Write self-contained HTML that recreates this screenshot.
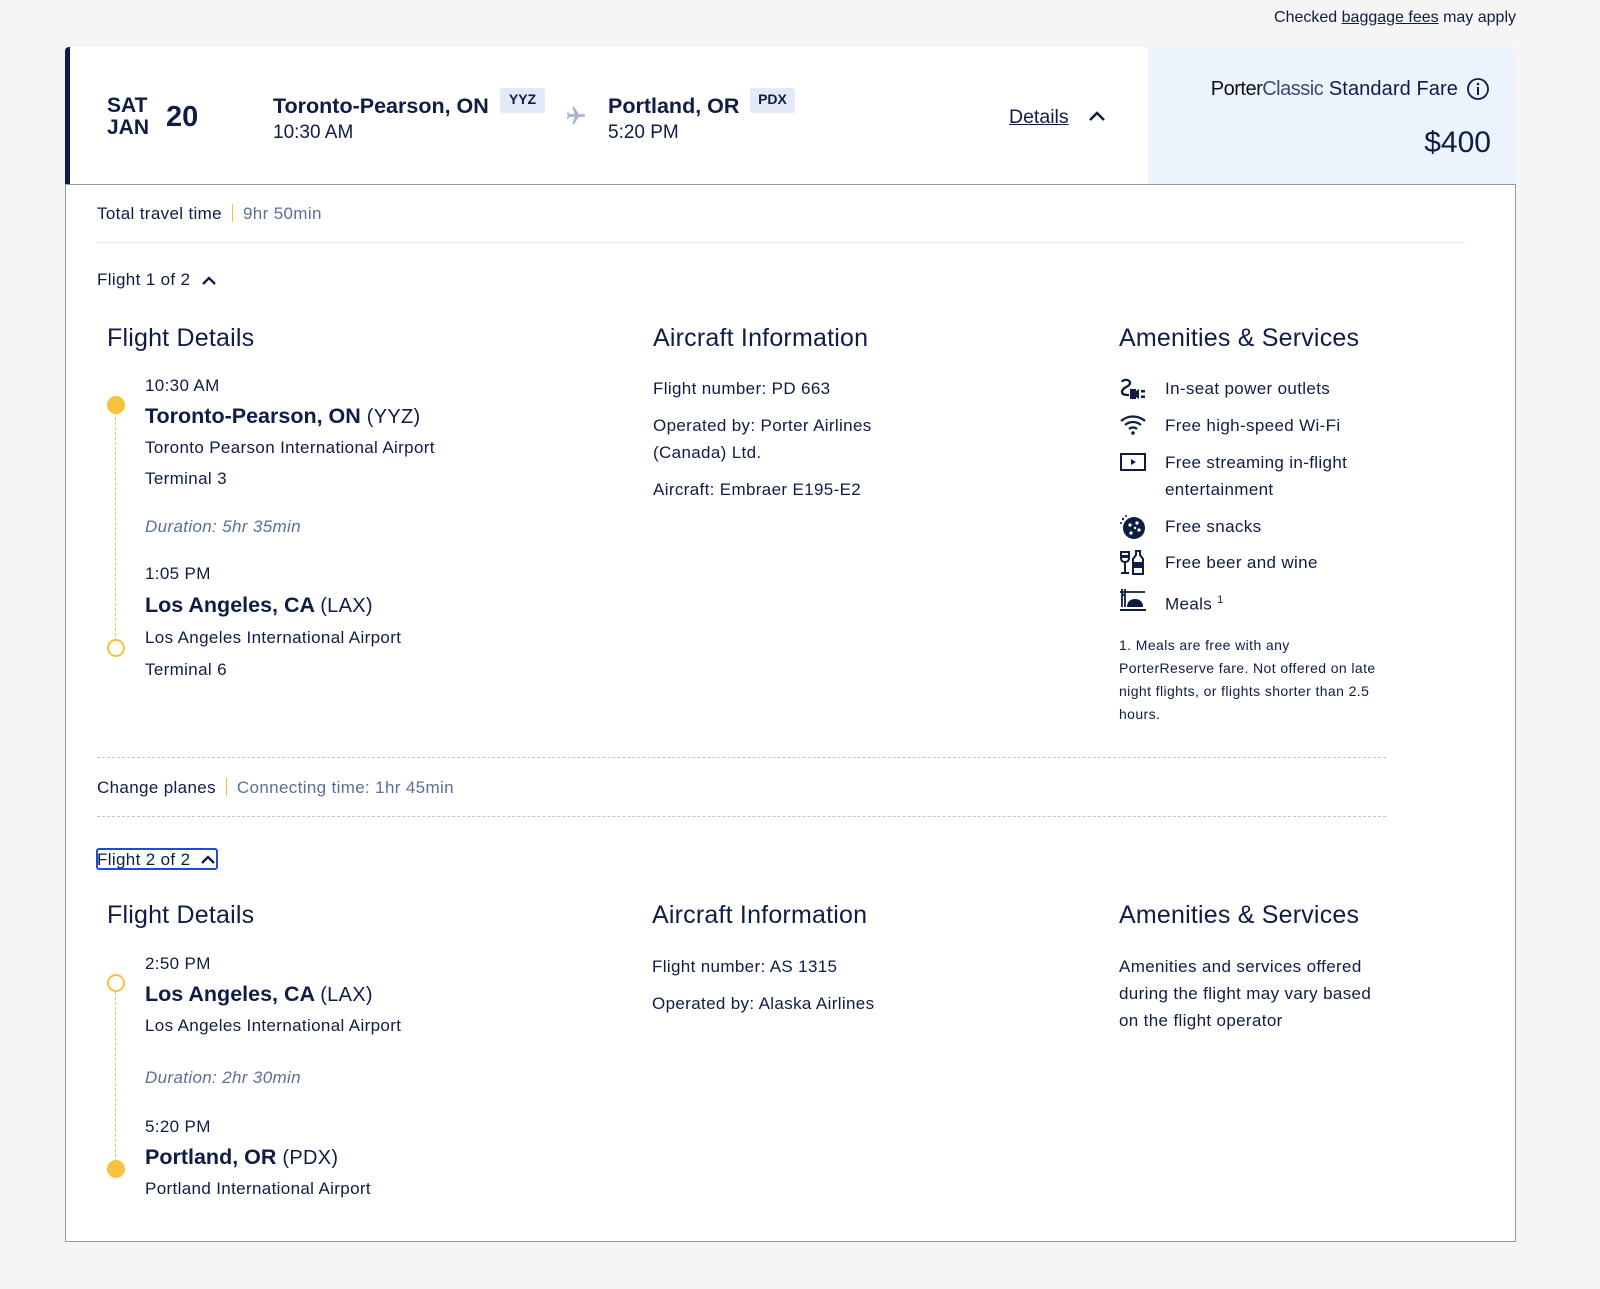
<!DOCTYPE html>
<html><head><meta charset="utf-8"><style>
*{margin:0;padding:0;box-sizing:border-box}
body{width:1600px;height:1289px;background:#f5f5f6;font-family:"Liberation Sans",Arial,sans-serif;color:#0f1d45;position:relative;overflow:hidden}
.t{position:absolute;white-space:nowrap;line-height:20px;font-size:17px;letter-spacing:0.35px}
.g{color:#5c6f96}
.h{font-size:25px;line-height:30px;letter-spacing:0.2px}
.b{font-weight:bold;font-size:21.5px;line-height:26px;letter-spacing:0}
.i{font-style:italic;color:#5c6f96}
.s{font-size:14px;line-height:23px;letter-spacing:0.4px}
.pipe{display:inline-block;width:1px;height:18px;background:#f5c04a;margin:0 10px;vertical-align:-3px}
.dash{position:absolute;height:0;border-top:1px dashed #b9c6dd}
.vl{position:absolute;width:0;border-left:1px dashed #f5c04a}
.dot{position:absolute;width:18px;height:18px;border-radius:50%;border:2px solid #f7c23e;background:#fff}
.dot.f{background:#f7c23e}
svg{position:absolute}
</style></head><body>
<div class="t" style="right:84px;top:8px;font-size:16px;letter-spacing:0">Checked <u>baggage fees</u> may apply</div>

<div style="position:absolute;left:65px;top:47px;width:1451px;height:137px;background:#fff;border-radius:4px 0 0 0;border-left:5px solid #0f1d45"></div>
<div style="position:absolute;left:1148px;top:47px;width:368px;height:137px;background:#ebf3fd;border-radius:0 6px 0 0"></div>
<div class="t" style="left:107px;top:95px;font-weight:bold;font-size:21px;line-height:22px;letter-spacing:0">SAT<br>JAN</div>
<div class="t" style="left:166px;top:101px;font-weight:bold;font-size:29px;line-height:32px;letter-spacing:0">20</div>
<div class="t" style="left:273px;top:94px;font-weight:bold;font-size:21.5px;line-height:24px;letter-spacing:0">Toronto-Pearson, ON</div>
<div class="t" style="left:273px;top:122px;font-size:19px;line-height:22px;letter-spacing:0">10:30 AM</div>
<div class="t" style="left:500px;top:88px;width:45px;height:25px;background:#e2eaf8;border-radius:3px;font-weight:bold;font-size:14px;line-height:22px;text-align:center;letter-spacing:0">YYZ</div>
<svg style="left:565px;top:105px" width="22" height="22" viewBox="0 0 24 24"><path fill="#a7b4c9" d="M21 16v-2l-8-5V3.5C13 2.7 12.3 2 11.5 2S10 2.7 10 3.5V9l-8 5v2l8-2.5V19l-2 1.5V22l3.5-1 3.5 1v-1.5L13 19v-5.5z" transform="rotate(90 12 12)"/></svg>
<div class="t" style="left:608px;top:94px;font-weight:bold;font-size:21.5px;line-height:24px;letter-spacing:0">Portland, OR</div>
<div class="t" style="left:608px;top:122px;font-size:19px;line-height:22px;letter-spacing:0">5:20 PM</div>
<div class="t" style="left:750px;top:88px;width:45px;height:25px;background:#e2eaf8;border-radius:3px;font-weight:bold;font-size:14px;line-height:22px;text-align:center;letter-spacing:0">PDX</div>
<div class="t" style="left:1009px;top:106px;font-size:19.5px;line-height:22px;text-decoration:underline;letter-spacing:0">Details</div>
<svg style="left:1087px;top:109px" width="20" height="14" viewBox="0 0 20 14"><path d="M3 11l7-7 7 7" fill="none" stroke="#0f1d45" stroke-width="2.5"/></svg>
<div class="t" style="right:142px;top:78px;font-size:20px;line-height:22px;letter-spacing:0.1px"><span style="color:#111;letter-spacing:-0.5px">Porter</span><span style="color:#3b4a6b;letter-spacing:-0.5px">Classic</span> Standard Fare</div>
<svg style="left:1466px;top:77px" width="24" height="24" viewBox="0 0 24 24"><circle cx="12" cy="12" r="10" fill="none" stroke="#0f1d45" stroke-width="1.8"/><rect x="11" y="10" width="2" height="8" fill="#0f1d45"/><circle cx="12" cy="7" r="1.3" fill="#0f1d45"/></svg>
<div class="t" style="right:109px;top:126px;font-size:30px;line-height:34px;letter-spacing:0">$400</div>

<div style="position:absolute;left:65px;top:184px;width:1451px;height:1058px;background:#fff;border:1px solid #9a9a9a"></div>
<div class="t" style="left:97px;top:204px">Total travel time<span class="pipe"></span><span class="g">9hr 50min</span></div>
<div style="position:absolute;left:97px;top:242px;width:1368px;height:1px;background:#e2e7f0"></div>
<div class="t" style="left:97px;top:270px">Flight 1 of 2</div>
<svg style="left:200px;top:274px" width="18" height="12" viewBox="0 0 18 12"><path d="M3 10l6-6 6 6" fill="none" stroke="#0f1d45" stroke-width="2.3"/></svg>

<div class="t h" style="left:107px;top:323px">Flight Details</div>
<div class="t h" style="left:653px;top:323px">Aircraft Information</div>
<div class="t h" style="left:1119px;top:323px">Amenities &amp; Services</div>

<div class="vl" style="left:115px;top:412px;height:234px"></div>
<div class="dot f" style="left:107px;top:396px"></div>
<div class="dot" style="left:107px;top:639px"></div>
<div class="t" style="left:145px;top:376px">10:30 AM</div>
<div class="t b" style="left:145px;top:403px">Toronto-Pearson, ON <span style="font-weight:normal;font-size:20px;letter-spacing:0.3px">(YYZ)</span></div>
<div class="t" style="left:145px;top:438px">Toronto Pearson International Airport</div>
<div class="t" style="left:145px;top:469px">Terminal 3</div>
<div class="t i" style="left:145px;top:517px">Duration: 5hr 35min</div>
<div class="t" style="left:145px;top:564px">1:05 PM</div>
<div class="t b" style="left:145px;top:592px">Los Angeles, CA <span style="font-weight:normal;font-size:20px;letter-spacing:0.3px">(LAX)</span></div>
<div class="t" style="left:145px;top:628px">Los Angeles International Airport</div>
<div class="t" style="left:145px;top:660px">Terminal 6</div>

<div class="t" style="left:653px;top:379px">Flight number: PD 663</div>
<div class="t" style="left:653px;top:416px">Operated by: Porter Airlines</div>
<div class="t" style="left:653px;top:443px">(Canada) Ltd.</div>
<div class="t" style="left:653px;top:480px">Aircraft: Embraer E195-E2</div>

<svg style="left:1119px;top:377px" width="28" height="24" viewBox="0 0 28 24"><path d="M3 5c1-3 8-3 8 1s-8 4-8 9c0 3 4 3 7 3" fill="none" stroke="#0f1d45" stroke-width="2.3"/><path d="M11 12h6v10h-6z" fill="#0f1d45"/><path d="M17 14l3-2v10l-3-2z" fill="#0f1d45"/><rect x="22" y="13" width="4" height="2.5" fill="#0f1d45"/><rect x="22" y="18.5" width="4" height="2.5" fill="#0f1d45"/></svg>
<svg style="left:1119px;top:415px" width="28" height="20" viewBox="0 0 28 20"><path d="M2 6c7-6 17-6 24 0M6 10c5-4 11-4 16 0M10 14c2.5-2 5.5-2 8 0" fill="none" stroke="#0f1d45" stroke-width="2.2"/><circle cx="14" cy="18" r="1.8" fill="#0f1d45"/></svg>
<svg style="left:1119px;top:451px" width="28" height="22" viewBox="0 0 28 22"><rect x="2" y="3" width="24" height="16" fill="none" stroke="#0f1d45" stroke-width="2"/><path d="M12 8l5 3-5 3z" fill="#0f1d45"/></svg>
<svg style="left:1119px;top:514px" width="28" height="26" viewBox="0 0 28 26"><circle cx="15" cy="14" r="11" fill="#0f1d45"/><circle cx="11" cy="11" r="1.6" fill="#fff"/><circle cx="18" cy="9" r="1.6" fill="#fff"/><circle cx="20" cy="16" r="1.6" fill="#fff"/><circle cx="12" cy="19" r="1.6" fill="#fff"/><circle cx="16" cy="14" r="1.2" fill="#fff"/><circle cx="4" cy="5" r="1.2" fill="#0f1d45"/><circle cx="7" cy="2" r="1" fill="#0f1d45"/><circle cx="2" cy="9" r="1" fill="#0f1d45"/></svg>
<svg style="left:1119px;top:550px" width="28" height="26" viewBox="0 0 28 26"><path d="M2 2h8v6c0 3-2 4-4 4s-4-1-4-4zM6 12v10M2 23h8" fill="none" stroke="#0f1d45" stroke-width="2"/><rect x="3" y="5" width="6" height="3" fill="#0f1d45"/><path d="M17 1h4v4l3 4v15h-10v-15l3-4z" fill="none" stroke="#0f1d45" stroke-width="2"/><rect x="15" y="12" width="8" height="6" fill="#0f1d45"/></svg>
<svg style="left:1119px;top:587px" width="28" height="26" viewBox="0 0 28 26"><path d="M3 2v18M6 2v18M3 8h3M1 5h25" fill="none" stroke="#0f1d45" stroke-width="1.8"/><path d="M8 20c0-6 4-8 8-8s8 2 8 8z" fill="#0f1d45"/><path d="M1 23h26" stroke="#0f1d45" stroke-width="2"/></svg>
<div class="t" style="left:1165px;top:379px">In-seat power outlets</div>
<div class="t" style="left:1165px;top:416px">Free high-speed Wi-Fi</div>
<div class="t" style="left:1165px;top:449px;line-height:27px">Free streaming in-flight<br>entertainment</div>
<div class="t" style="left:1165px;top:517px">Free snacks</div>
<div class="t" style="left:1165px;top:553px">Free beer and wine</div>
<div class="t" style="left:1165px;top:590px">Meals <sup style="font-size:11px">1</sup></div>
<div class="t s" style="left:1119px;top:634px">1. Meals are free with any<br>PorterReserve fare. Not offered on late<br>night flights, or flights shorter than 2.5<br>hours.</div>

<div class="dash" style="left:97px;top:757px;width:1289px"></div>
<div class="t" style="left:97px;top:778px">Change planes<span class="pipe"></span><span class="g">Connecting time: 1hr 45min</span></div>
<div class="dash" style="left:97px;top:816px;width:1289px"></div>

<div style="position:absolute;left:96px;top:848px;width:122px;height:22px;border:2px solid #1d4ed8;border-radius:3px"></div>
<div class="t" style="left:97px;top:850px">Flight 2 of 2</div>
<svg style="left:199px;top:853px" width="18" height="12" viewBox="0 0 18 12"><path d="M3 10l6-6 6 6" fill="none" stroke="#0f1d45" stroke-width="2.3"/></svg>

<div class="t h" style="left:107px;top:900px">Flight Details</div>
<div class="t h" style="left:652px;top:900px">Aircraft Information</div>
<div class="t h" style="left:1119px;top:900px">Amenities &amp; Services</div>

<div class="vl" style="left:115px;top:992px;height:170px"></div>
<div class="dot" style="left:107px;top:974px"></div>
<div class="dot f" style="left:107px;top:1160px"></div>
<div class="t" style="left:145px;top:954px">2:50 PM</div>
<div class="t b" style="left:145px;top:981px">Los Angeles, CA <span style="font-weight:normal;font-size:20px;letter-spacing:0.3px">(LAX)</span></div>
<div class="t" style="left:145px;top:1016px">Los Angeles International Airport</div>
<div class="t i" style="left:145px;top:1068px">Duration: 2hr 30min</div>
<div class="t" style="left:145px;top:1117px">5:20 PM</div>
<div class="t b" style="left:145px;top:1144px">Portland, OR <span style="font-weight:normal;font-size:20px;letter-spacing:0.3px">(PDX)</span></div>
<div class="t" style="left:145px;top:1179px">Portland International Airport</div>

<div class="t" style="left:652px;top:957px">Flight number: AS 1315</div>
<div class="t" style="left:652px;top:994px">Operated by: Alaska Airlines</div>

<div class="t" style="left:1119px;top:953px;line-height:27px">Amenities and services offered<br>during the flight may vary based<br>on the flight operator</div>
</body></html>
